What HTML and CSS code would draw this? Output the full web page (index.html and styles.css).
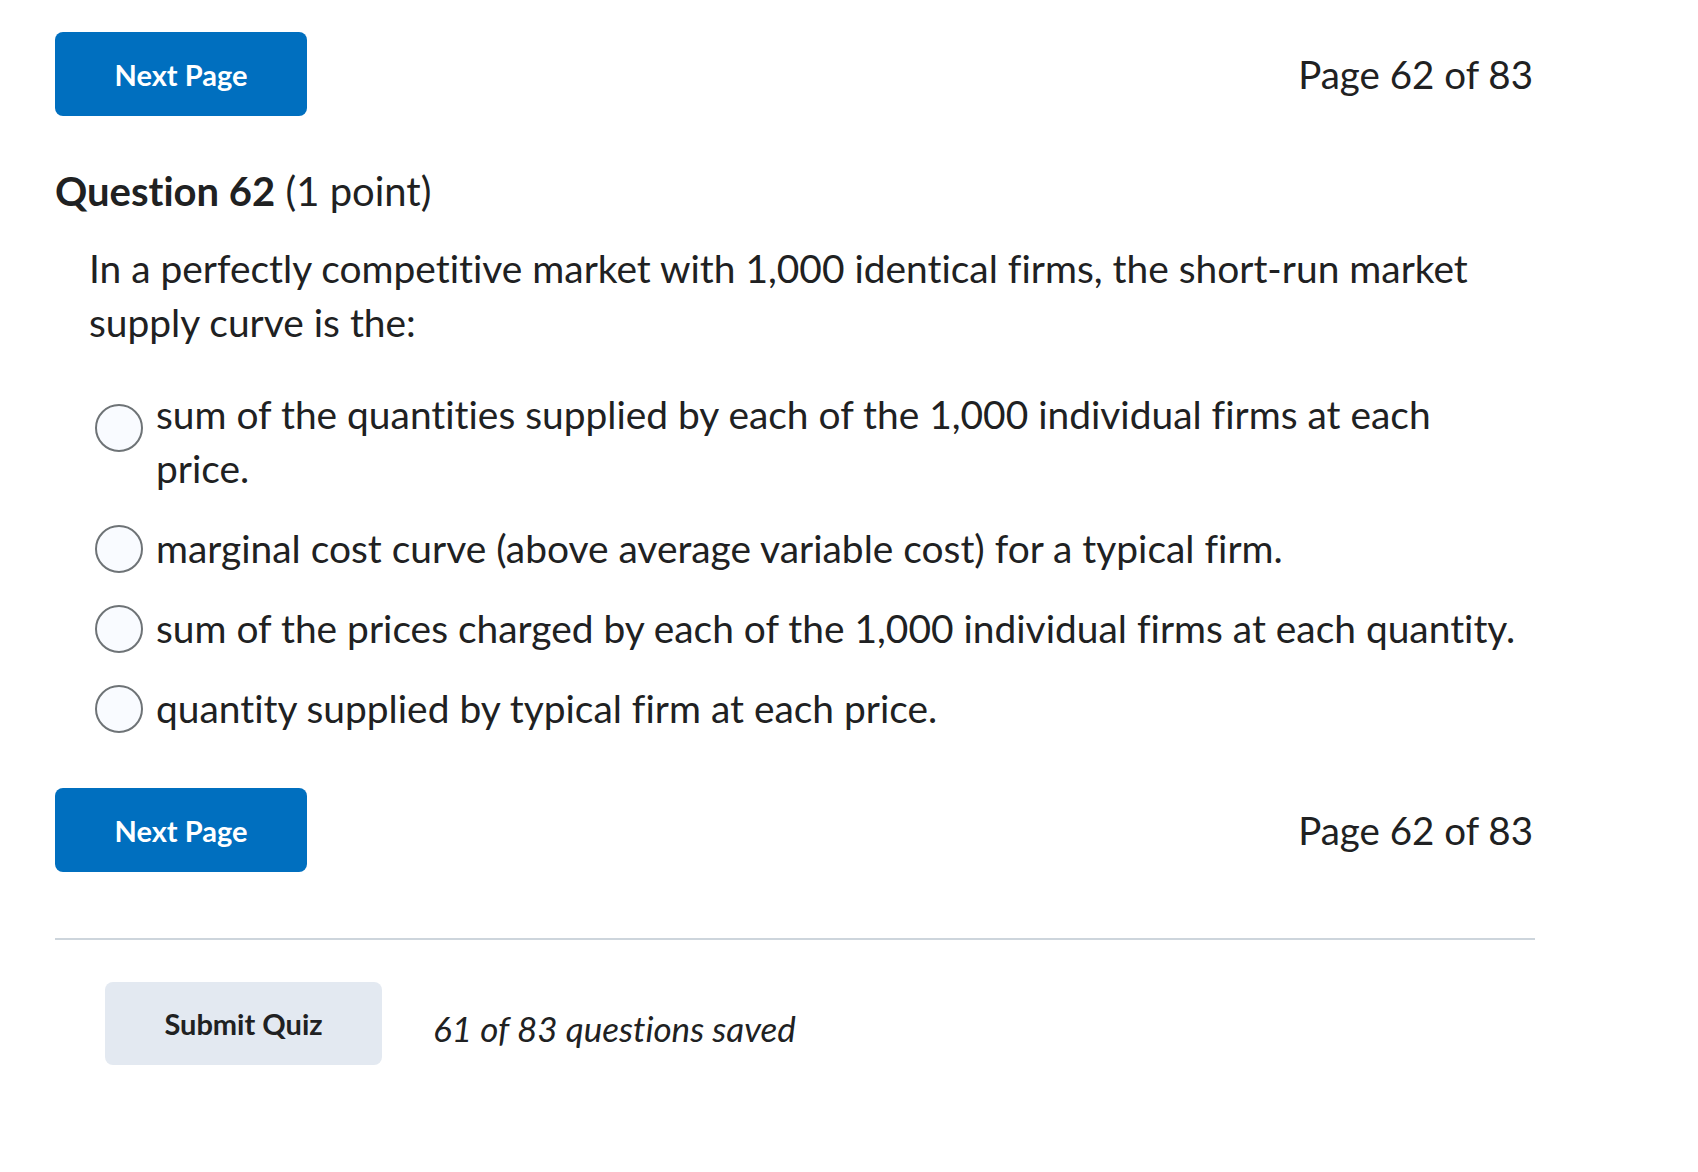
FILE: index.html
```html
<!DOCTYPE html>
<html lang="en">
<head>
<meta charset="utf-8">
<title>Quiz</title>
<link rel="stylesheet" href="styles.css">
</head>
<body>
<div class="page">
  <div class="nav">
    <button class="btn-primary">Next Page</button>
    <span class="page-info">Page 62 of 83</span>
  </div>

  <h2 class="q-title"><strong>Question 62</strong> (1 point)</h2>

  <p class="q-text">In a perfectly competitive market with 1,000 identical firms, the short-run market supply curve is the:</p>

  <ul class="options">
    <li class="option option-multi"><span class="radio"></span><span class="opt-text">sum of the quantities supplied by each of the 1,000 individual firms at each price.</span></li>
    <li class="option"><span class="radio"></span><span class="opt-text">marginal cost curve (above average variable cost) for a typical firm.</span></li>
    <li class="option"><span class="radio"></span><span class="opt-text">sum of the prices charged by each of the 1,000 individual firms at each quantity.</span></li>
    <li class="option"><span class="radio"></span><span class="opt-text">quantity supplied by typical firm at each price.</span></li>
  </ul>

  <div class="nav nav-bottom">
    <button class="btn-primary">Next Page</button>
    <span class="page-info">Page 62 of 83</span>
  </div>

  <hr class="divider">

  <div class="submit-row">
    <button class="btn-secondary">Submit Quiz</button>
    <span class="saved">61 of 83 questions saved</span>
  </div>
</div>
</body>
</html>
```

FILE: styles.css
```css
* { box-sizing: border-box; }

body {
  margin: 0;
  background: #ffffff;
  color: #202122;
  font-family: Lato, "Open Sans", sans-serif;
  font-variant-ligatures: none;
}

.page {
  width: 1535px;
  padding: 32px 0 0 55px;
}

.nav {
  display: flex;
  justify-content: space-between;
  align-items: center;
  height: 84px;
}

.nav-bottom {
  margin-top: 53px;
}

.btn-primary {
  width: 252px;
  height: 84px;
  border: none;
  border-radius: 8px;
  background: #006fbf;
  color: #ffffff;
  font-family: Lato, sans-serif;
  font-variant-ligatures: none;
  font-weight: 700;
  font-size: 29px;
  padding: 0;
}

.page-info {
  font-size: 38.5px;
  padding-right: 2px;
  color: #202122;
}

.q-title {
  margin: 50px 0 0 0;
  font-size: 40px;
  line-height: 50px;
  font-weight: 400;
}

.q-title strong { font-weight: 700; }

.q-text {
  margin: 25px 0 0 34px;
  font-size: 38.9px;
  line-height: 54px;
}

.options {
  list-style: none;
  margin: 38px 0 0 40px;
  padding: 0;
  width: 1427px;
  display: flex;
  flex-direction: column;
  gap: 26px;
}

.option {
  display: flex;
  align-items: flex-start;
  gap: 13px;
  font-size: 38.9px;
  line-height: 54px;
}

.radio {
  flex: none;
  width: 48px;
  height: 48px;
  margin-top: 4px;
  border: 2px solid #6e7376;
  border-radius: 50%;
  background: #f9fbff;
}

.option-multi .radio { margin-top: 17px; }

.opt-text { flex: 1; }

.divider {
  margin: 66px 0 0 0;
  border: none;
  border-top: 2px solid #cdd5dc;
  width: 1480px;
}

.submit-row {
  display: flex;
  align-items: center;
  gap: 51px;
  margin-top: 42px;
  padding-left: 50px;
}

.btn-secondary {
  width: 277px;
  height: 83px;
  border: none;
  border-radius: 8px;
  background: #e3e9f1;
  color: #202122;
  font-family: Lato, sans-serif;
  font-variant-ligatures: none;
  font-weight: 700;
  font-size: 29px;
  padding: 0;
}

.saved {
  font-style: italic;
  font-size: 35px;
  margin-top: 8px;
}
```
